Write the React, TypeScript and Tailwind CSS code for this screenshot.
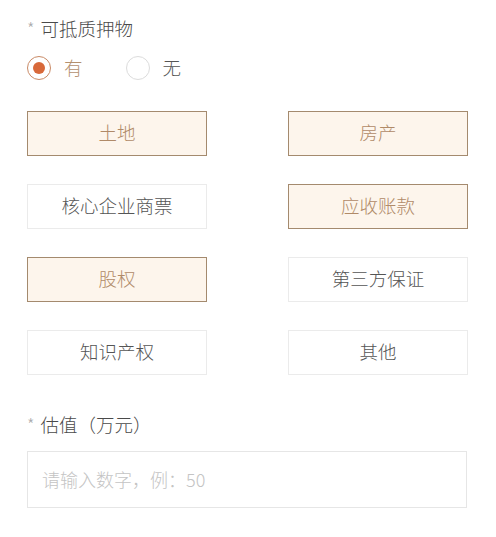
import { useState } from "react";

const options = [
  { label: "土地", on: true },
  { label: "房产", on: true },
  { label: "核心企业商票", on: false },
  { label: "应收账款", on: true },
  { label: "股权", on: true },
  { label: "第三方保证", on: false },
  { label: "知识产权", on: false },
  { label: "其他", on: false },
];

function Radio({ checked, label }: { checked: boolean; label: string }) {
  return (
    <div className="flex items-center gap-[13px]">
      <span
        className={
          checked
            ? "flex h-[24px] w-[24px] items-center justify-center rounded-full border-[1.5px] border-[#c98a66] bg-white"
            : "flex h-[24px] w-[24px] items-center justify-center rounded-full border border-[#dcdcdc] bg-white"
        }
      >
        {checked && <span className="h-[12px] w-[12px] rounded-full bg-[#d8693a]" />}
      </span>
      <span className={checked ? "text-[18.5px] font-light text-[#b4906e]" : "text-[18.5px] font-light text-[#555]"}>
        {label}
      </span>
    </div>
  );
}

export default function App() {
  const [value, setValue] = useState("");
  return (
    <div
      className="min-h-screen w-[496px] bg-white px-[27px] pt-[15px]"
      style={{ fontFamily: '"Noto Sans CJK SC", "Noto Sans", sans-serif' }}
    >
      <div className="flex items-center text-[18.5px] font-light leading-[26px] text-[#4a4a4a]">
        <span className="mr-[6px] text-[17px] text-[#aaa]">*</span>
        可抵质押物
      </div>

      <div className="mt-[13px] flex items-center gap-[43px]">
        <Radio checked label="有" />
        <Radio checked={false} label="无" />
      </div>

      <div className="mt-[29px] grid grid-cols-2 gap-x-[81px] gap-y-[28px] pr-[1px]">
        {options.map((o) => (
          <div
            key={o.label}
            className={
              o.on
                ? "flex h-[45px] w-[180px] items-center justify-center border-[1.5px] border-[#a48a6e] bg-[#fdf5ec] text-[18.5px] font-light text-[#b08a68]"
                : "flex h-[45px] w-[180px] items-center justify-center border border-[#ebebeb] bg-white text-[18.5px] font-light text-[#555]"
            }
          >
            {o.label}
          </div>
        ))}
      </div>

      <div className="mt-[36px] flex items-center text-[18.5px] font-light leading-[26px] text-[#4a4a4a]">
        <span className="mr-[6px] text-[17px] text-[#aaa]">*</span>
        估值（万元）
      </div>

      <input
        value={value}
        onChange={(e) => setValue(e.target.value)}
        placeholder="请输入数字，例：50"
        className="mt-[14px] h-[57px] w-[440px] border border-[#e6e6e6] bg-white px-[14px] text-[18px] font-light text-[#333] outline-none placeholder:text-[#c4c4c4]"
      />
    </div>
  );
}
